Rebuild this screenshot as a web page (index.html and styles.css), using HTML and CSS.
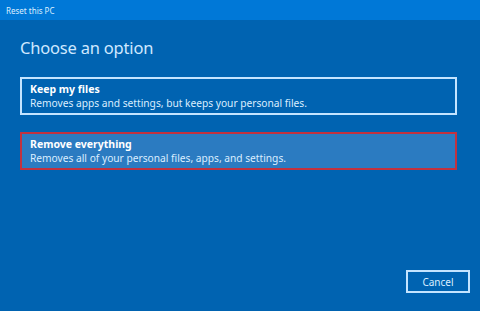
FILE: index.html
```html
<!DOCTYPE html>
<html lang="en">
<head>
    <meta charset="UTF-8">
    <title>Reset this PC</title>
    <link rel="stylesheet" href="styles.css">
</head>
<body>

    <div class="titlebar">Reset this PC</div>

    <div class="content">
        <h1 class="heading">Choose an option</h1>

        <div class="option">
            <div class="option-title">Keep my files</div>
            <div class="option-desc">Removes apps and settings, but keeps your personal files.</div>
        </div>

        <div class="option selected">
            <div class="option-title">Remove everything</div>
            <div class="option-desc">Removes all of your personal files, apps, and settings.</div>
        </div>

        <div class="actions">
            <button class="btn">Cancel</button>
        </div>
    </div>

</body>
</html>
```

FILE: styles.css
```css
body {
    margin: 0;
    padding: 0;
    width: 480px;
    height: 311px;
    overflow: hidden;
    background: #0063b1;
    font-family: "Noto Sans", "Open Sans", sans-serif;
    color: #fff;
}

.titlebar {
    height: 20px;
    line-height: 21px;
    background: #0078d7;
    color: #dcefff;
    font-size: 8px;
    padding-left: 6px;
}

.content {
    padding: 0 23px 0 20px;
    display: flex;
    flex-direction: column;
}

.heading {
    margin: 17px 0 0 0;
    font-size: 16.5px;
    font-weight: normal;
    color: #cfe8ff;
    line-height: 22px;
    letter-spacing: -0.2px;
}

.option {
    margin-top: 18px;
    border: 2px solid #c4e4ff;
    padding: 3px 8px;
    height: 28px;
}

.option + .option {
    margin-top: 17px;
}

.option.selected {
    background: #2b7bc1;
    border-color: #c2323f;
}

.option-title {
    font-size: 10.5px;
    font-weight: bold;
    line-height: 14px;
}

.option-desc {
    font-size: 10.2px;
    line-height: 14px;
    color: #dbeeff;
}

.actions {
    display: flex;
    justify-content: flex-end;
    margin-top: 100px;
    margin-right: -13px;
}

.btn {
    width: 64px;
    height: 23px;
    background: transparent;
    border: 2px solid #c4e4ff;
    color: #dbeeff;
    font-family: "Noto Sans", "Open Sans", sans-serif;
    font-size: 10px;
    padding: 0;
}
```
